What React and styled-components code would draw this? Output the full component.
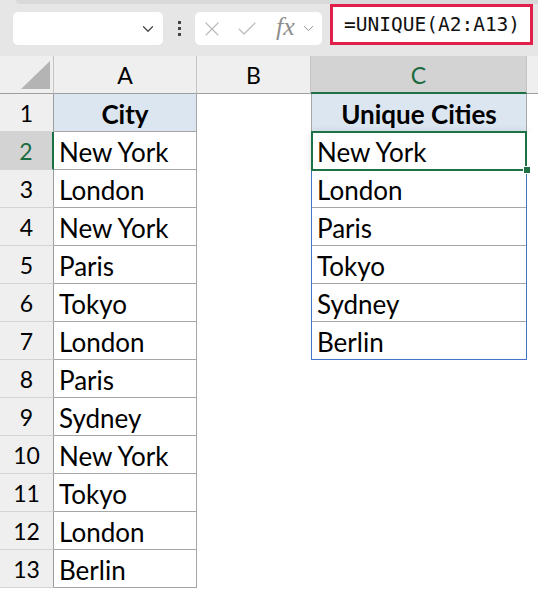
import React from 'react'
import styled, { createGlobalStyle } from 'styled-components'
import { ChevronDown, X, Check } from 'lucide-react'

const GlobalStyle = createGlobalStyle`
  html, body {
    margin: 0;
    padding: 0;
    background: #ffffff;
  }
  * { box-sizing: border-box; }
`

const cities = ['New York', 'London', 'New York', 'Paris', 'Tokyo', 'London', 'Paris', 'Sydney', 'New York', 'Tokyo', 'London', 'Berlin']
const unique = ['New York', 'London', 'Paris', 'Tokyo', 'Sydney', 'Berlin']

export default function App() {
  return (
    <Page>
      <GlobalStyle />
      <Toolbar>
        <RibbonEdge />
        <ToolbarRow>
          <NameBox>
            <ChevronDown size={18} strokeWidth={1.6} color="#444" />
          </NameBox>
          <Dots>
            <span /><span /><span />
          </Dots>
          <ButtonBox>
            <X size={24} strokeWidth={1.1} color="#b8b8b8" />
            <Check size={24} strokeWidth={1.1} color="#b8b8b8" />
            <Fx>fx</Fx>
            <ChevronDown size={17} strokeWidth={1.4} color="#8f8f8f" />
          </ButtonBox>
          <FormulaBox>=UNIQUE(A2:A13)</FormulaBox>
        </ToolbarRow>
      </Toolbar>

      <Sheet>
        <Corner>
          <svg width="32" height="30" viewBox="0 0 32 30">
            <polygon points="31,1 31,29 2,29" fill="#b4b4b4" />
          </svg>
        </Corner>
        <ColHead>A</ColHead>
        <ColHead>B</ColHead>
        <ColHead $active>C</ColHead>
        <ColHead $last />

        {cities.concat(['']).map((_, i) => {
          const row = i + 1
          return (
            <React.Fragment key={row}>
              <RowHead $active={row === 2}>{row}</RowHead>
              <Cell $bordered $head={row === 1}>{row === 1 ? 'City' : cities[i - 1]}</Cell>
              <Cell />
              {row === 1 && <Cell $bordered $head $leftEdge>Unique Cities</Cell>}
              {row === 2 && (
                <Spill>
                  {unique.map((c, j) => (
                    <SpillCell key={j} $selected={j === 0} $last={j === unique.length - 1}>
                      {c}
                      {j === 0 && <FillHandle />}
                    </SpillCell>
                  ))}
                </Spill>
              )}
              {row > 7 && <Cell />}
              <Cell />
            </React.Fragment>
          )
        })}
      </Sheet>
    </Page>
  )
}

const Page = styled.div`
  width: 538px;
  height: 589px;
  overflow: hidden;
  font-family: Lato, 'Open Sans', sans-serif;
`

const Toolbar = styled.div`
  height: 56px;
  background: #e6e6e6;
  display: flex;
  flex-direction: column;
`

const RibbonEdge = styled.div`
  height: 4px;
  margin-left: 16px;
  background: #d9d9d9;
  border-bottom-left-radius: 4px;
`

const ToolbarRow = styled.div`
  display: flex;
  align-items: flex-start;
  padding-left: 13px;
`

const NameBox = styled.div`
  width: 150px;
  height: 33px;
  margin-top: 8px;
  background: #ffffff;
  border-radius: 5px;
  display: flex;
  align-items: center;
  justify-content: flex-end;
  padding-right: 6px;
`

const Dots = styled.div`
  width: 32px;
  height: 33px;
  margin-top: 8px;
  display: flex;
  flex-direction: column;
  align-items: center;
  justify-content: center;
  gap: 3px;
  span {
    width: 3px;
    height: 3px;
    background: #444;
  }
`

const ButtonBox = styled.div`
  width: 127px;
  height: 33px;
  margin-top: 8px;
  background: #ffffff;
  border-radius: 5px;
  display: flex;
  align-items: center;
  gap: 11px;
  padding-left: 5px;
`

const Fx = styled.span`
  font-family: 'Liberation Serif', serif;
  font-style: italic;
  font-size: 26px;
  line-height: 1;
  color: #8f8f8f;
  margin-left: 6px;
  margin-right: -6px;
  margin-top: -4px;
`

const FormulaBox = styled.div`
  width: 203px;
  height: 41px;
  margin-left: 8px;
  background: #ffffff;
  border: 3.5px solid #e0204a;
  display: flex;
  align-items: center;
  padding-left: 11px;
  font-family: 'DejaVu Sans Mono', 'Liberation Mono', monospace;
  font-size: 19.5px;
  color: #111;
`

const Sheet = styled.div`
  display: grid;
  grid-template-columns: 54px 143px 114px 216px 1fr;
  grid-template-rows: repeat(14, 38px);
`

const Corner = styled.div`
  background: #efefef;
  border-right: 1px solid #c4c4c4;
  border-bottom: 1px solid #9e9e9e;
  display: flex;
  align-items: flex-end;
  justify-content: flex-end;
  padding: 0 2px 3px 0;
`

const ColHead = styled.div`
  background: ${p => (p.$active ? '#d3d3d3' : '#efefef')};
  color: ${p => (p.$active ? '#1d6b40' : '#000')};
  border-right: ${p => (p.$last ? 'none' : '1px solid #c4c4c4')};
  border-bottom: ${p => (p.$active ? '2px solid #1e7145' : '1px solid #9e9e9e')};
  display: flex;
  align-items: center;
  justify-content: center;
  font-size: 23px;
  padding-top: ${p => (p.$active ? '2px' : '0')};
`

const RowHead = styled.div`
  background: ${p => (p.$active ? '#d3d3d3' : '#efefef')};
  color: ${p => (p.$active ? '#1d6b40' : '#000')};
  border-right: ${p => (p.$active ? '2px solid #1e7145' : '1px solid #9e9e9e')};
  border-bottom: 1px solid #d4d4d4;
  display: flex;
  align-items: center;
  justify-content: center;
  font-size: 23px;
`

const Cell = styled.div`
  background: ${p => (p.$head ? '#dce6f1' : '#ffffff')};
  border-right: ${p => (p.$bordered ? '1px solid #a6a6a6' : 'none')};
  border-bottom: ${p => (p.$bordered ? '1px solid #a6a6a6' : 'none')};
  border-left: ${p => (p.$leftEdge ? '1px solid #a6a6a6' : 'none')};
  display: flex;
  align-items: center;
  justify-content: ${p => (p.$head ? 'center' : 'flex-start')};
  padding-left: ${p => (p.$head ? '0' : '5px')};
  padding-top: 2px;
  font-size: 26px;
  font-weight: ${p => (p.$head ? 700 : 400)};
  color: #000;
  white-space: nowrap;
`

const Spill = styled.div`
  grid-row: 3 / span 6;
  grid-column: 4;
  display: flex;
  flex-direction: column;
  border: 1px solid #4472c4;
  border-top: none;
  box-shadow: 0 0 8px rgba(0, 0, 0, 0.12);
  background: #ffffff;
`

const SpillCell = styled.div`
  position: relative;
  flex: 1;
  display: flex;
  align-items: center;
  padding-left: 5px;
  padding-top: 2px;
  font-size: 26px;
  color: #000;
  border-bottom: ${p => (p.$last ? 'none' : '1px solid #a6a6a6')};
  outline: ${p => (p.$selected ? '2px solid #1e7145' : 'none')};
  outline-offset: -1px;
  z-index: ${p => (p.$selected ? 1 : 0)};
`

const FillHandle = styled.span`
  position: absolute;
  right: -5px;
  bottom: -5px;
  width: 8px;
  height: 8px;
  background: #1e7145;
  border: 1px solid #ffffff;
`
